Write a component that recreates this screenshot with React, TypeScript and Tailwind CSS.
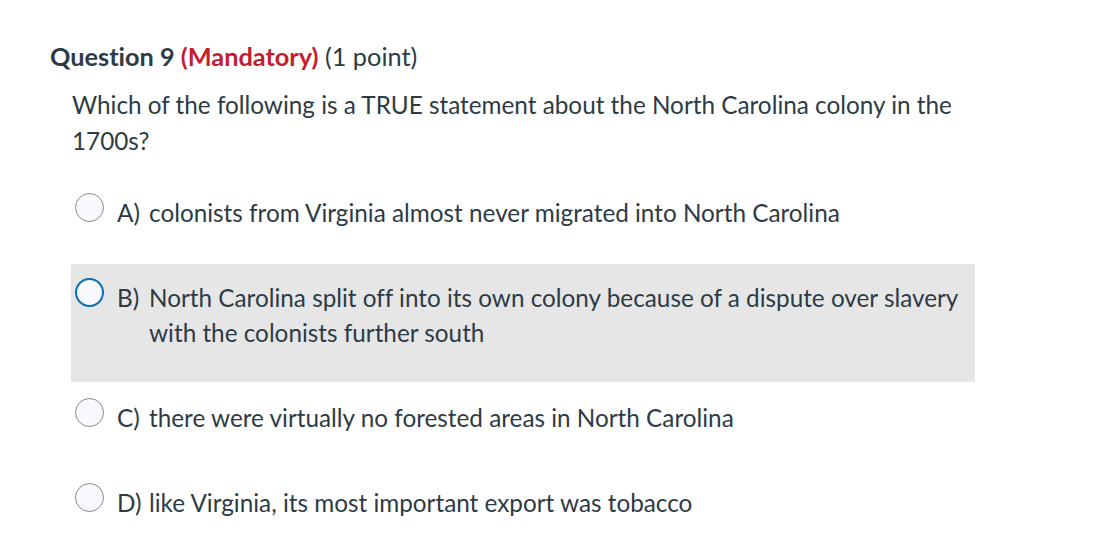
import React from "react";

const options = [
  { letter: "A)", text: "colonists from Virginia almost never migrated into North Carolina", active: false },
  { letter: "B)", text: "North Carolina split off into its own colony because of a dispute over slavery with the colonists further south", active: true },
  { letter: "C)", text: "there were virtually no forested areas in North Carolina", active: false },
  { letter: "D)", text: "like Virginia, its most important export was tobacco", active: false },
];

export default function App() {
  return (
    <div className="w-[1110px] h-[537px] bg-white overflow-hidden text-[#2d3b45] [font-variant-ligatures:none]" style={{ fontFamily: "Lato, 'Noto Sans', sans-serif" }}>
      <div className="pt-[41px] pl-[50px]">
        <h2 className="text-[25.3px] leading-[30px]">
          <span className="font-bold">Question 9 </span>
          <span className="font-bold text-[#c41e2e]">(Mandatory)</span>
          <span> (1 point)</span>
        </h2>
        <div className="pl-[22px] pt-[16px] w-[925px]">
          <p className="text-[24.3px] leading-[36px]">
            Which of the following is a TRUE statement about the North Carolina colony in the 1700s?
          </p>
        </div>
        <div className="ml-[21px] mt-[18px] w-[904px] flex flex-col">
          {options.map((o) => (
            <div key={o.letter} className="pt-[2px]">
              <div
                className={`flex items-start pl-[4px] pt-[16px] pb-[32px] ${o.active ? "bg-[#e6e6e6]" : ""}`}
              >
                <div className="w-[42px] h-[35px] flex items-start shrink-0">
                  {o.active ? (
                    <span className="block -mt-[2px] w-[29px] h-[29px] rounded-full border-[2.5px] border-[#0a6fb9] bg-[#f7f9fc]" />
                  ) : (
                    <span className="block -mt-[2px] w-[29px] h-[29px] rounded-full border border-[#8a8a8a] bg-[#f7f9fc]" />
                  )}
                </div>
                <div className="w-[32px] shrink-0 text-[24.3px] leading-[35px]">{o.letter}</div>
                <div className="text-[24.3px] leading-[35px] w-[822px]">{o.text}</div>
              </div>
            </div>
          ))}
        </div>
      </div>
    </div>
  );
}
